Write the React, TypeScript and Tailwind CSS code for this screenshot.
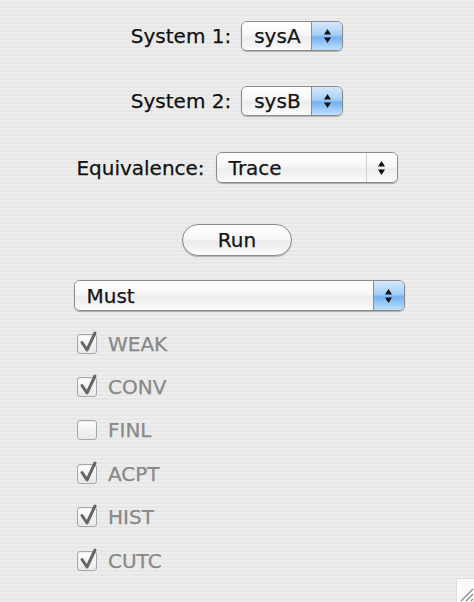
import React from "react";

function Arrows({ color = "#111" }: { color?: string }) {
  return (
    <svg width="9" height="16" viewBox="0 0 9 16">
      <polygon points="4.5,1 8,6.5 1,6.5" fill={color} />
      <polygon points="4.5,15 8,9.5 1,9.5" fill={color} />
    </svg>
  );
}

function Popup({
  text,
  width,
  active,
  height = 30,
}: {
  text: string;
  width: string;
  active: boolean;
  height?: number;
}) {
  return (
    <div
      className={`flex ${width} rounded-[6px] border border-[#8a8a8a] overflow-hidden shadow-[0_1px_1px_rgba(0,0,0,0.25)]`}
      style={{ height }}
    >
      <div className="flex-1 flex items-center pl-[12px] text-[#141414] bg-[linear-gradient(#ffffff,#f7f7f7_45%,#ececec_55%,#fbfbfb)]">
        {text}
      </div>
      {active ? (
        <div className="w-[31px] flex items-center justify-center border-l border-[#6d93c4] bg-[linear-gradient(#d6e8fc,#a5cff8_45%,#75b2f1_55%,#bfe0fd)]">
          <Arrows />
        </div>
      ) : (
        <div className="w-[31px] flex items-center justify-center border-l border-[#cfcfcf] bg-[linear-gradient(#ffffff,#f7f7f7_45%,#ececec_55%,#fbfbfb)]">
          <Arrows />
        </div>
      )}
    </div>
  );
}

function Check({ label, checked }: { label: string; checked: boolean }) {
  return (
    <div className="flex items-center h-[43.4px]">
      <div className="relative w-[20px] h-[20px] rounded-[3px] border border-[#a8a8a8] bg-[linear-gradient(#ffffff,#f3f3f3_50%,#e9e9e9)] shadow-[inset_0_1px_1px_rgba(0,0,0,0.08)]">
        {checked && (
          <svg
            className="absolute left-[1px] top-[-4px]"
            width="20"
            height="22"
            viewBox="0 0 20 22"
          >
            <path
              d="M3 11.5 L8 19 L16 2"
              stroke="#666666"
              strokeWidth="3"
              fill="none"
              strokeLinecap="round"
              strokeLinejoin="round"
            />
          </svg>
        )}
      </div>
      <span className="ml-[11px] text-[#888888]">{label}</span>
    </div>
  );
}

export default function App() {
  return (
    <div className="relative w-[474px] h-[602px] overflow-hidden font-['DejaVu_Sans',sans-serif] text-[20px] leading-none [-webkit-text-stroke:0.25px] bg-[repeating-linear-gradient(0deg,#ededed_0px,#ededed_2px,#e7e7e7_2px,#e7e7e7_4px)]">
      <div className="flex flex-col items-center pt-[21px]">
        <div className="flex items-center gap-[10px] h-[30px]">
          <span className="text-[#111111]">System 1:</span>
          <Popup text="sysA" width="w-[102px]" active />
        </div>
        <div className="flex items-center gap-[10px] h-[30px] mt-[35px]">
          <span className="text-[#111111]">System 2:</span>
          <Popup text="sysB" width="w-[102px]" active />
        </div>
        <div className="flex items-center gap-[11px] h-[31px] mt-[36px]">
          <span className="text-[#111111]">Equivalence:</span>
          <Popup text="Trace" width="w-[182px]" active={false} height={31} />
        </div>
        <div className="mt-[41px] w-[110px] h-[32px] rounded-full border border-[#8a8a8a] flex items-center justify-center text-[#141414] bg-[linear-gradient(#ffffff,#f7f7f7_45%,#eaeaea_55%,#fdfdfd)] shadow-[0_1px_1px_rgba(0,0,0,0.25)]">
          Run
        </div>
        <div className="mt-[24px] ml-[4px]">
          <Popup text="Must" width="w-[331px]" active height={31} />
        </div>
      </div>
      <div className="flex flex-col pl-[77px] mt-[11px]">
        <Check label="WEAK" checked />
        <Check label="CONV" checked />
        <Check label="FINL" checked={false} />
        <Check label="ACPT" checked />
        <Check label="HIST" checked />
        <Check label="CUTC" checked />
      </div>
      <div className="absolute right-0 bottom-0 w-[18px] h-[24px] bg-[#fafafa] border-l border-t border-[#dcdcdc]">
        <svg className="absolute right-0 bottom-0" width="18" height="18" viewBox="0 0 18 18">
          <line x1="17" y1="5" x2="5" y2="17" stroke="#8a8a8a" strokeWidth="1.2" />
          <line x1="17" y1="10" x2="10" y2="17" stroke="#8a8a8a" strokeWidth="1.2" />
          <line x1="17" y1="15" x2="15" y2="17" stroke="#8a8a8a" strokeWidth="1.2" />
        </svg>
      </div>
    </div>
  );
}
